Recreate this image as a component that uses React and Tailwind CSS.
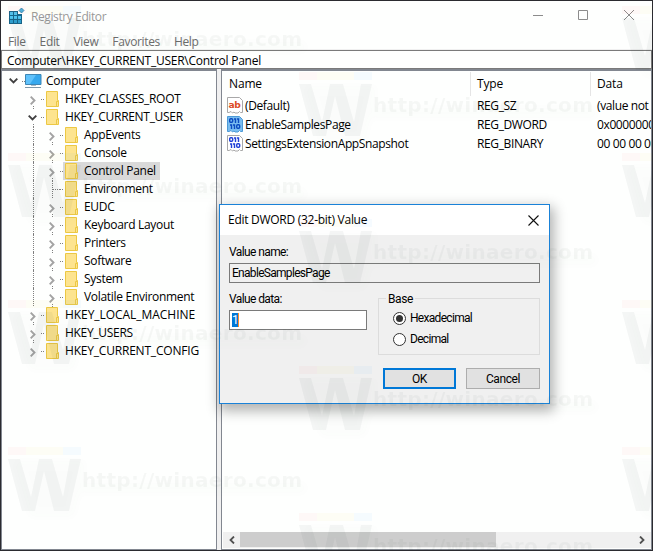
import React from 'react';

const tree = [
  { name: 'HKEY_CLASSES_ROOT', level: 1 },
  { name: 'HKEY_CURRENT_USER', level: 1, open: true },
  { name: 'AppEvents', level: 2 },
  { name: 'Console', level: 2 },
  { name: 'Control Panel', level: 2, selected: true },
  { name: 'Environment', level: 2, leaf: true },
  { name: 'EUDC', level: 2 },
  { name: 'Keyboard Layout', level: 2 },
  { name: 'Printers', level: 2 },
  { name: 'Software', level: 2 },
  { name: 'System', level: 2 },
  { name: 'Volatile Environment', level: 2 },
  { name: 'HKEY_LOCAL_MACHINE', level: 1, tracking: 'tracking-[-0.05px]' },
  { name: 'HKEY_USERS', level: 1 },
  { name: 'HKEY_CURRENT_CONFIG', level: 1, last: true, tracking: 'tracking-[-0.2px]' },
];

const values = [
  { name: '(Default)', type: 'REG_SZ', data: '(value not set)', icon: 'ab' },
  { name: 'EnableSamplesPage', type: 'REG_DWORD', data: '0x00000001 (1)', icon: 'bin', selected: true },
  { name: 'SettingsExtensionAppSnapshot', type: 'REG_BINARY', data: '00 00 00 00 00', icon: 'bin' },
];

const marks = [
  [8, 6], [8, 153], [8, 300], [8, 447],
  [299, 72], [299, 219], [299, 366], [299, 513],
  [622, 6], [622, 153], [622, 300], [622, 447],
];

const RegistryIcon = () => (
  <svg width="16" height="16" viewBox="0 0 16 16">
    <path d="M0 3h9v3h4v10H0z" fill="#17658a" />
    <path d="M1 4h3v3H1zM5 4h3v3H5zM1 8h3v3H1zM5 8h3v3H5zM9 8h3v3H9z" fill="#4fc3ee" />
    <path d="M1 12h3v3H1zM5 12h3v3H5zM9 12h3v3H9z" fill="#2fa3d4" />
    <path d="M12.500 0l2.500 2.500L12.500 5 10 2.500z" fill="#4bb4e0" stroke="#2b7fa6" strokeWidth=".8" />
  </svg>
);

const ComputerIcon = () => (
  <svg width="17" height="16" viewBox="0 0 17 16" className="shrink-0">
    <path d="M.5 1.500h15.500v10H.5z" fill="#35a8ee" stroke="#3d86b5" />
    <path d="M1 2h10L5 11H1z" fill="#5fc2fb" />
    <path d="M6 12h5v1H6z" fill="#a9bcc9" />
    <path d="M0 14h16v1H0z" fill="#7e98aa" />
  </svg>
);

const Folder = () => (
  <svg width="13" height="16" viewBox="0 0 13 16" className="shrink-0">
    <path d="M.5.500h11v9h1v6H.5z" fill="#fde48f" stroke="#ecc844" />
    <path d="M10.500 15V10.500h2V15" fill="#fde48f" stroke="#ecc844" />
  </svg>
);

const Chevron = ({ open }) => (
  open ? (
    <svg width="9" height="6" viewBox="0 0 9 6"><path d="M.7.700l3.800 3.800L8.300.700" fill="none" stroke="#404040" strokeWidth="1.900" /></svg>
  ) : (
    <svg width="6" height="9" viewBox="0 0 6 9"><path d="M.7.700l3.800 3.800L.7 8.300" fill="none" stroke="#a3a3a3" strokeWidth="1.900" /></svg>
  )
);

const ValueIcon = ({ kind, selected }) => (
  <svg width="16" height="17" viewBox="0 0 16 17" className="shrink-0">
    <path
      d="M.5.500h12l3 3v12h-2l-1-1-1.500 1.500h-3l-1-1-1.500 1-1.500-1.500-2 1H.5z"
      fill={selected ? '#79bdf0' : '#fff'}
      stroke={selected ? '#4d9ad6' : '#a8a8a8'}
    />
    {kind === 'ab' ? (
      <text x="1.500" y="10.500" fontFamily="DejaVu Sans" fontWeight="bold" fontSize="9.500" textLength="12" lengthAdjust="spacingAndGlyphs" fill="#dc4a26">ab</text>
    ) : (
      <g fill="none" stroke={selected ? '#0a4bc0' : '#2040d8'} strokeWidth="1.400">
        <rect x="2.700" y="2.700" width="3" height="3.600" rx="1" />
        <path d="M7 3h1.500v4M10 3h1.500v4M3 9h1.500v4M6 9h1.500v4" />
        <rect x="9.700" y="8.700" width="3" height="3.600" rx="1" />
      </g>
    )}
  </svg>
);

const TreeRow = ({ name, level, open, leaf, last, selected, tracking = 'tracking-[-0.3px]' }) => (
  <div className={`relative flex h-[18px] items-center ${level === 1 ? 'pl-[28px]' : 'pl-[47px]'}`}>
    {level === 2 && <span className="absolute left-[31px] top-0 h-full border-l border-dotted border-[#808080]" />}
    {!last && (
      <span className={`absolute border-l border-dotted border-[#808080] ${level === 1 ? 'left-[31px]' : 'left-[50px]'} ${leaf ? 'top-0 h-full' : 'top-[16px] h-[3px]'}`} />
    )}
    <span className="flex w-[11px] items-center">
      {leaf ? <span className="ml-[4px] w-[7px] border-t border-dotted border-[#808080]" /> : <span className={`flex pt-[2px] ${open ? '-ml-[2px]' : ''}`}><Chevron open={open} /></span>}
    </span>
    <span className="w-[3px] border-t border-dotted border-[#808080]" />
    <span className={`flex h-full items-center pl-[2px] pr-1 ${selected ? 'bg-[#d9d9d9]' : ''}`}>
      <Folder />
      <span className={`ml-[6px] whitespace-nowrap ${tracking}`}>{name}</span>
    </span>
  </div>
);

const Watermark = () => (
  <svg className="pointer-events-none absolute -left-px -top-px" width="653" height="551">
    <defs>
      <filter id="soft" x="-20%" y="-20%" width="150%" height="150%"><feGaussianBlur stdDeviation="4" /></filter>
    </defs>
    {marks.map(([x, y]) => (
      <g key={`${x}-${y}`} transform={`translate(${x} ${y})`}>
        <path d="M6 14h72L66 70H22zM74 36h224v10H74z" fill="#507050" opacity=".012" filter="url(#soft)" />
        <path d="M0 0h18v8H0z" fill="#ff3030" opacity=".035" />
        <path d="M18 0h37v8H18z" fill="#f0d020" opacity=".04" />
        <path d="M55 0h18v8H55z" fill="#30a0ff" opacity=".045" />
        <path d="M0 12h12l11 38 8-38h13l11 38 7-38h11L61 64H46L36 24 27 64H14z" fill="#203828" opacity=".045" />
        <text x="74" y="40" fontFamily="DejaVu Sans" fontWeight="bold" fontSize="20" textLength="220" fill="#203828" opacity=".035">http://winaero.com</text>
      </g>
    ))}
  </svg>
);

const Dialog = () => (
  <div className="absolute left-[218px] top-[203px] flex h-[200px] w-[331px] flex-col border border-[#1a82d8] bg-[#f0f0f0] shadow-[2px_5px_12px_2px_rgba(0,0,0,0.3)]">
    <div className="flex h-[30px] items-center justify-between bg-white pl-2 pr-[10px]">
      <span className="tracking-[-0.28px]">Edit DWORD (32-bit) Value</span>
      <svg width="11" height="11" viewBox="0 0 11 11"><path d="M.5.500l10 10M10.500.500l-10 10" stroke="#111" strokeWidth="1.100" /></svg>
    </div>
    <div className="flex flex-1 flex-col px-[9px] pt-[9px] font-['Roboto'] tracking-[-0.7px]">
      <label className="h-[19px] leading-[16px] tracking-[-0.6px]">Value name:</label>
      <div className="flex h-[20px] items-center border border-[#7a7a7a] pl-[2px]">EnableSamplesPage</div>
      <div className="mt-2 flex justify-between">
        <div>
          <label className="block h-[19px] leading-[16px] tracking-[-0.6px]">Value data:</label>
          <div className="flex h-[20px] w-[138px] items-center border border-[#7a7a7a] bg-white pl-[2px]">
            <span className="h-[14px] w-[7px] border-r border-[#ff8a28] bg-[#0078d7] leading-[14px] text-white">1</span>
          </div>
        </div>
        <div className="relative mt-[7px] flex h-[57px] w-[162px] flex-col gap-[3px] border border-[#dcdcdc] pl-[14px] pt-[10px]">
          <span className="absolute left-[7px] top-[-8px] bg-[#f0f0f0] px-[2px] leading-[16px] tracking-[-0.4px]">Base</span>
          {['Hexadecimal', 'Decimal'].map((label, i) => (
            <span key={label} className="flex h-[18px] items-center gap-[4px]">
              <span className="flex size-[13px] items-center justify-center rounded-full border border-[#333] bg-white">
                {i === 0 && <span className="size-[7px] rounded-full bg-[#333]" />}
              </span>
              {label}
            </span>
          ))}
        </div>
      </div>
      <div className="mt-[13px] flex justify-end gap-[10px] tracking-[-0.4px]">
        <button className="h-[21px] w-[73px] border-2 border-[#0078d7] bg-[#e1e1e1]">OK</button>
        <button className="h-[21px] w-[74px] border border-[#adadad] bg-[#e1e1e1]">Cancel</button>
      </div>
    </div>
  </div>
);

export default function App() {
  return (
    <div className="relative flex h-[551px] w-[653px] flex-col overflow-hidden border border-[#2b2b30] bg-[#fefffe] font-['Open_Sans',sans-serif] text-[12px] leading-[16px] text-black">
      {/* Title bar */}
      <div className="flex h-[30px] items-center pl-2 text-[#999]">
        <RegistryIcon />
        <span className="ml-[6px] flex-1 pt-px tracking-[-0.4px]">Registry Editor</span>
        <svg width="102" height="12" viewBox="0 0 102 12" className="mr-[17px]" fill="none" stroke="#8c8c8c">
          <path d="M0 5.500h10M45.500.500h9v9h-9zM91 0l10 10M101 0L91 10" />
        </svg>
      </div>

      {/* Menu */}
      <div className="flex h-[18px] items-center gap-[14px] pl-[7px] pt-[3px] tracking-[-0.35px] text-[#6d6d6d]">
        <span>File</span>
        <span>Edit</span>
        <span>View</span>
        <span>Favorites</span>
        <span>Help</span>
      </div>
      <div className="h-px bg-[#f0f0f0]" />

      {/* Address bar */}
      <div className="flex h-[19px] items-center border border-[#7a7a7a] pl-[5px] pt-[3px] tracking-[-0.25px]">
        Computer\HKEY_CURRENT_USER\Control Panel
      </div>

      <div className="flex min-h-0 flex-1 bg-[#f0f0f0]">
        {/* Key tree */}
        <div className="w-[216px] border border-t-2 border-[#828790] bg-[#fefffe] pt-px">
          <div className="relative flex h-[18px] items-center pl-[7px]">
            <Chevron open />
            <span className="ml-[4px] w-[3px] border-t border-dotted border-[#808080]" />
            <ComputerIcon />
            <span className="ml-1 tracking-[-0.25px]">Computer</span>
          </div>
          {tree.map((row) => <TreeRow key={row.name} {...row} />)}
        </div>

        {/* Values */}
        <div className="ml-[4px] flex min-w-0 flex-1 flex-col border border-t-2 border-[#828790] bg-[#fefffe] pt-px">
          <div className="flex h-[24px] shrink-0 items-center tracking-[-0.15px]">
            <span className="h-full w-[249px] border-r border-[#e5e5e5] pl-[7px] leading-[24px]">Name</span>
            <span className="h-full w-[120px] border-r border-[#e5e5e5] pl-[6px] leading-[24px]">Type</span>
            <span className="pl-[6px]">Data</span>
          </div>
          {values.map((v) => (
            <div key={v.name} className="flex h-[19px] shrink-0 items-center overflow-hidden whitespace-nowrap pl-[5px] tracking-[-0.38px]">
              <ValueIcon kind={v.icon} selected={v.selected} />
              <span className="w-[230px] shrink-0 pl-[2px]">{v.name}</span>
              <span className="w-[120px] shrink-0 pl-[4px]">{v.type}</span>
              <span className="pl-[4px]">{v.data}</span>
            </div>
          ))}
          <div className="mb-px ml-px mt-auto flex h-[16px] items-center bg-[#f0f0f0]">
            <span className="flex w-[17px] justify-center">
              <svg width="6" height="8" viewBox="0 0 6 8"><path d="M5 .5L1.500 4 5 7.500" fill="none" stroke="#505050" strokeWidth="1.800" /></svg>
            </span>
            <span className="h-[15px] w-[256px] self-start bg-[#cdcdcd]" />
            <svg width="6" height="8" viewBox="0 0 6 8" className="ml-auto mr-[6px]"><path d="M1 .5L4.500 4 1 7.500" fill="none" stroke="#505050" strokeWidth="1.800" /></svg>
          </div>
        </div>
      </div>

      <Dialog />
      <Watermark />
    </div>
  );
}
